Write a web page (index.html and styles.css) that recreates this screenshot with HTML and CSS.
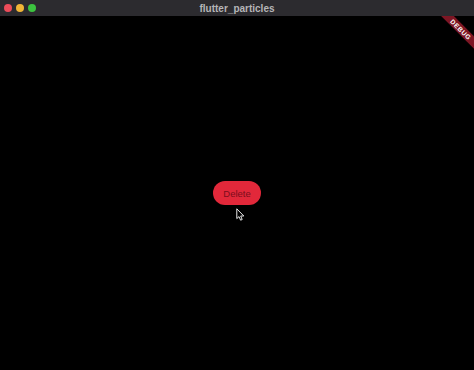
FILE: index.html
```html
<!DOCTYPE html>
<html lang="en">
<head>
    <meta charset="UTF-8">
    <meta name="viewport" content="width=device-width, initial-scale=1.0">
    <title>flutter_particles</title>
    <link rel="stylesheet" href="styles.css">
</head>
<body>

<div class="window">
    <div class="titlebar">
        <div class="lights">
            <span class="light red"></span>
            <span class="light yellow"></span>
            <span class="light green"></span>
        </div>
        <div class="title">flutter_particles</div>
    </div>
    <div class="content">
        <button class="btn-delete">Delete</button>
        <!-- mouse pointer over the button -->
        <svg class="cursor" width="9" height="13" viewBox="0 0 9 13">
            <path d="M0.8 0.8 L0.8 10.6 L3 8.6 L4.6 12.2 L6.2 11.5 L4.7 8 L7.8 8 Z" fill="#000" stroke="#e8e8e8" stroke-width="1" stroke-linejoin="round"/>
        </svg>
        <div class="banner-clip">
            <div class="banner">DEBUG</div>
        </div>
    </div>
</div>

</body>
</html>
```

FILE: styles.css
```css
html, body {
    margin: 0;
    padding: 0;
    background-color: #000;
}
.window {
    width: 474px;
    height: 370px;
    display: flex;
    flex-direction: column;
    font-family: "Liberation Sans", Arial, sans-serif;
}
.titlebar {
    height: 16px;
    background-color: #2c2b2f;
    display: flex;
    align-items: center;
    position: relative;
}
.lights {
    display: flex;
    gap: 4px;
    padding-left: 4px;
}
.light {
    width: 8px;
    height: 8px;
    border-radius: 50%;
}
.red { background-color: #ec4c5a; }
.yellow { background-color: #f0b536; }
.green { background-color: #3cc33f; }
.title {
    position: absolute;
    left: 0;
    right: 0;
    text-align: center;
    font-size: 10px;
    font-weight: bold;
    color: #b5b5b7;
}
.content {
    flex: 1;
    background-color: #000;
    display: flex;
    justify-content: center;
    align-items: center;
    position: relative;
}
.btn-delete {
    width: 48px;
    height: 24px;
    border: none;
    border-radius: 12px;
    background-color: #e2283a;
    color: #7c0d1c;
    font-family: "Liberation Sans", Arial, sans-serif;
    font-size: 9.5px;
    padding: 0;
    cursor: pointer;
}
.cursor {
    position: absolute;
    left: 236px;
    top: 192px;
}
.banner-clip {
    position: absolute;
    top: 0;
    right: 0;
    width: 40px;
    height: 40px;
    overflow: hidden;
}
.banner {
    position: absolute;
    left: -3px;
    top: 9px;
    width: 60px;
    height: 9px;
    line-height: 9px;
    background-color: #7d1624;
    color: #fff;
    font-size: 6.5px;
    font-weight: bold;
    letter-spacing: 0.6px;
    text-align: center;
    transform: rotate(45deg);
}
```
